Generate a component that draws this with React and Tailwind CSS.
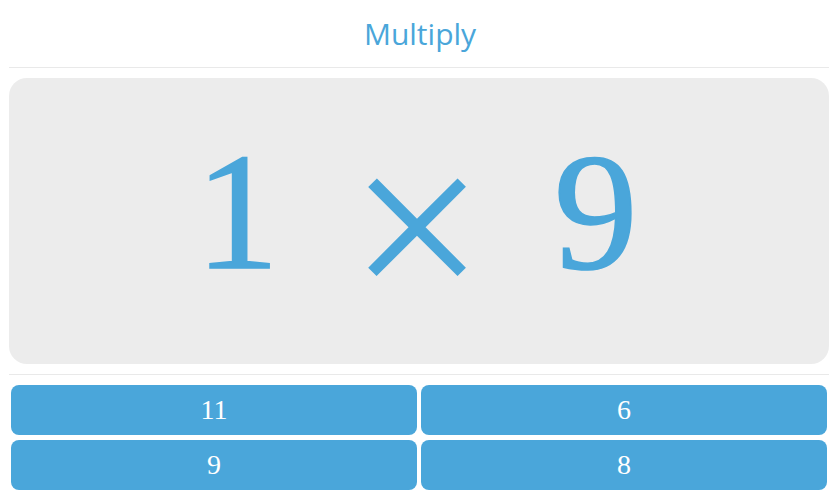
import React from "react";

const answers = [11, 6, 9, 8];

const App = () => {
  return (
    <div className="w-[840px] h-[501px] bg-white overflow-hidden">
      {/* Title */}
      <div className="h-[67px] flex items-center justify-center">
        <h1 className="text-[30px] text-[#4aa6da] font-['Open_Sans',sans-serif] leading-none">
          Multiply
        </h1>
      </div>

      <div className="ml-[9px] mr-[11px] border-t border-[#e9e9e9]" />

      {/* Question */}
      <div className="ml-[9px] mr-[11px] mt-[10px] h-[286px] rounded-[18px] bg-[#ececec] flex items-center justify-center text-[#4aa6da] font-['Liberation_Serif',serif]">
        <div className="flex items-center leading-none pr-[5px] mt-[-21px] [-webkit-text-stroke:1.5px_#4aa6da]">
          <span className="text-[168px]">1</span>
          <span className="text-[240px] ml-[70px] mr-[69px] translate-y-[15px] [-webkit-text-stroke:0px]">×</span>
          <span className="text-[168px]">9</span>
        </div>
      </div>

      <div className="ml-[9px] mr-[11px] mt-[10px] border-t border-[#e9e9e9]" />

      {/* Answers */}
      <div className="ml-[9px] mr-[11px] px-[2px] mt-[10px] grid grid-cols-2 gap-x-[4px] gap-y-[5px]">
        {answers.map((a) => (
          <button
            key={a}
            className="h-[50px] rounded-[8px] bg-[#4aa6da] text-white text-[28px] font-['Liberation_Serif',serif] flex items-center justify-center"
          >
            {a}
          </button>
        ))}
      </div>
    </div>
  );
};

export default App;
